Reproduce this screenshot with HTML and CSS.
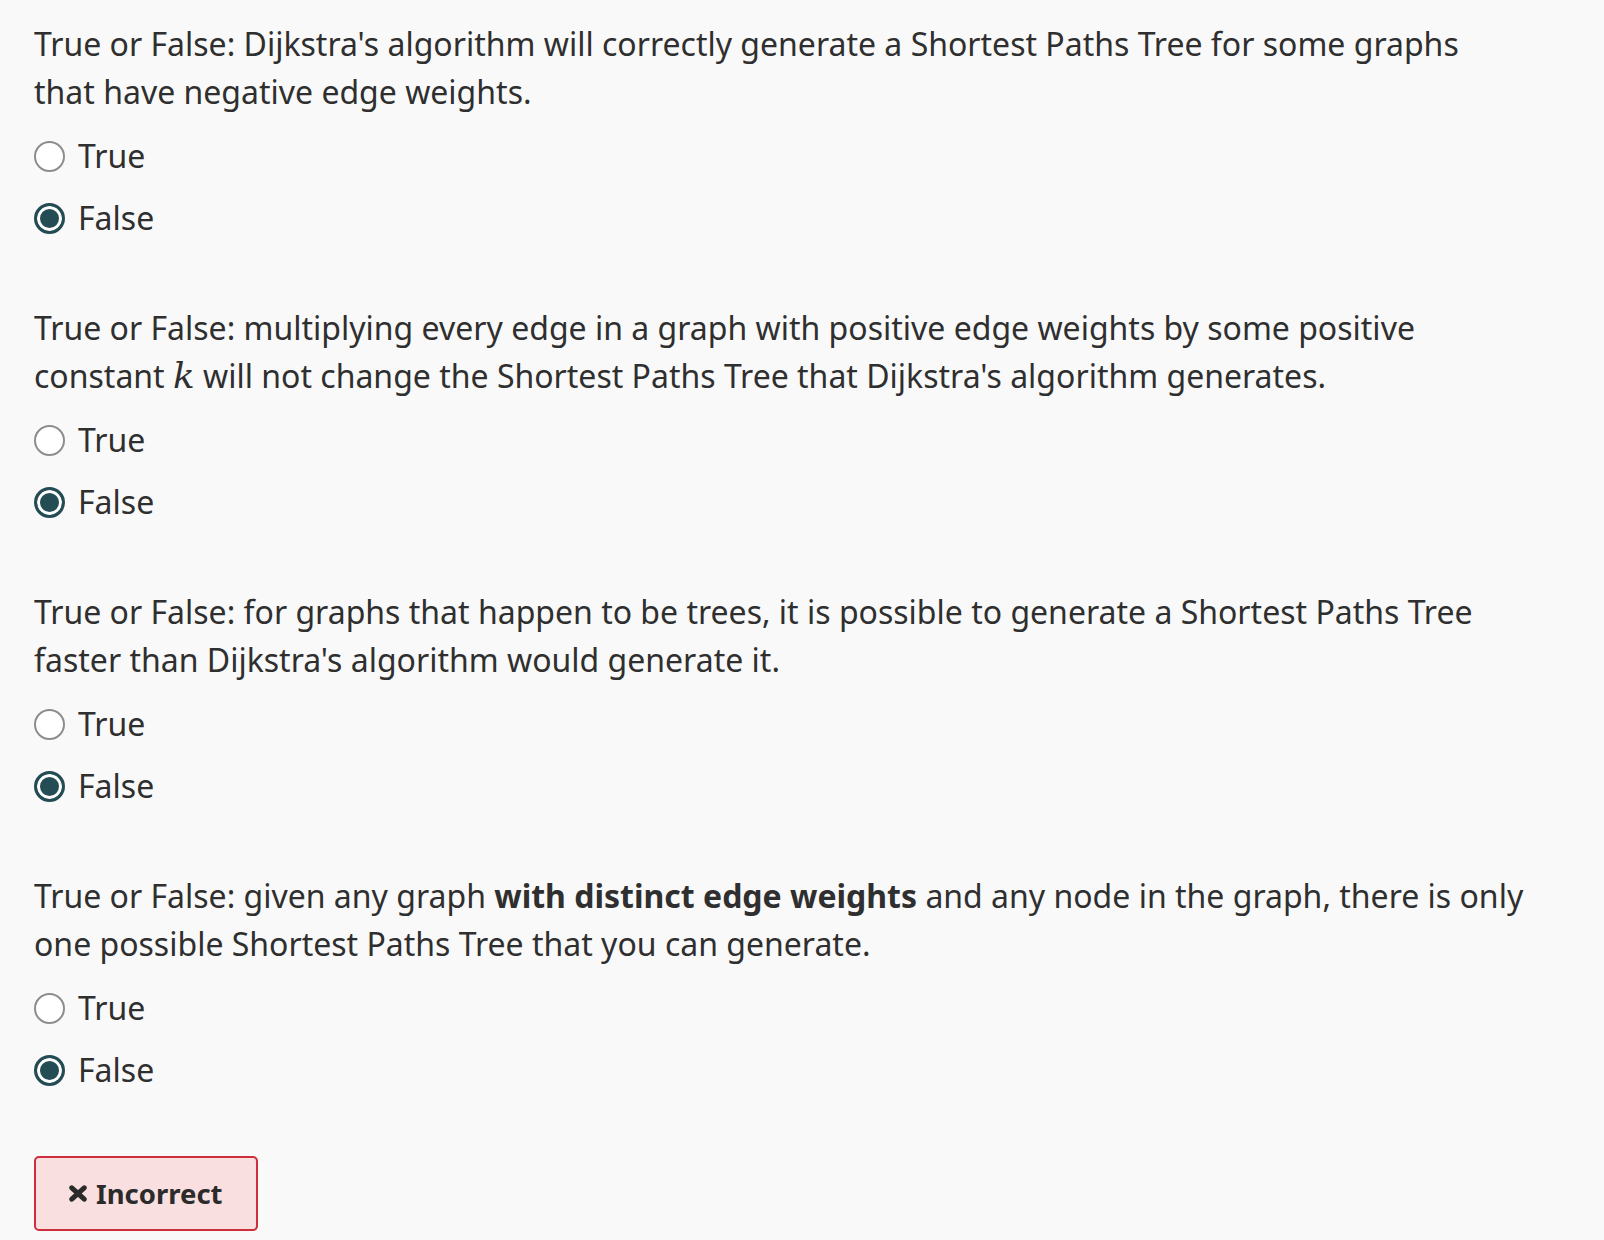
FILE: index.html
```html
<!DOCTYPE html>
<html lang="en">
<head>
<meta charset="utf-8">
<title>Quiz</title>
<link rel="stylesheet" href="styles.css">
</head>
<body>
<main class="quiz">
  <section class="question">
    <p class="prompt">True or False: Dijkstra's algorithm will correctly generate a Shortest Paths Tree for some graphs that have negative edge weights.</p>
    <label class="option"><input type="radio" name="q1" class="radio"><span>True</span></label>
    <label class="option"><input type="radio" name="q1" class="radio" checked><span>False</span></label>
  </section>
  <section class="question">
    <p class="prompt">True or False: multiplying every edge in a graph with positive edge weights by some positive constant <span class="math">k</span> will not change the Shortest Paths Tree that Dijkstra's algorithm generates.</p>
    <label class="option"><input type="radio" name="q2" class="radio"><span>True</span></label>
    <label class="option"><input type="radio" name="q2" class="radio" checked><span>False</span></label>
  </section>
  <section class="question">
    <p class="prompt">True or False: for graphs that happen to be trees, it is possible to generate a Shortest Paths Tree faster than Dijkstra's algorithm would generate it.</p>
    <label class="option"><input type="radio" name="q3" class="radio"><span>True</span></label>
    <label class="option"><input type="radio" name="q3" class="radio" checked><span>False</span></label>
  </section>
  <section class="question">
    <p class="prompt">True or False: given any graph <strong>with distinct edge weights</strong> and any node in the graph, there is only one possible Shortest Paths Tree that you can generate.</p>
    <label class="option"><input type="radio" name="q4" class="radio"><span>True</span></label>
    <label class="option"><input type="radio" name="q4" class="radio" checked><span>False</span></label>
  </section>
  <div class="result">
    <svg class="x-icon" viewBox="0 0 18 17" width="18" height="17" aria-hidden="true">
      <path d="M2.8 2.8 L15.2 14.2 M15.2 2.8 L2.8 14.2" stroke="#2b2b2b" stroke-width="5" stroke-linecap="round"/>
    </svg>
    <span>Incorrect</span>
  </div>
</main>
</body>
</html>
```

FILE: styles.css
```css
html, body {
  margin: 0;
  padding: 0;
  background: #f9f9f9;
}
body {
  font-family: "Noto Sans", "Open Sans", sans-serif;
  font-size: 32px;
  line-height: 48px;
  color: #2f2f2f;
}
.quiz {
  padding: 20px 0 0 34px;
  width: 1492px;
}
.question {
  margin-bottom: 62px;
}
.prompt {
  margin: 0 0 16px 0;
}
.prompt strong {
  font-weight: 700;
}
.math {
  font-family: "DejaVu Serif", "Liberation Serif", serif;
  font-style: italic;
  font-size: 1.12em;
  line-height: 1;
}
.option {
  display: flex;
  align-items: center;
  gap: 13px;
  height: 48px;
  margin-bottom: 14px;
}
.option:last-child {
  margin-bottom: 0;
}
.radio {
  appearance: none;
  -webkit-appearance: none;
  margin: 0;
  width: 31px;
  height: 31px;
  border: 2px solid #8d8d8d;
  border-radius: 50%;
  background: #ffffff;
  box-sizing: border-box;
  flex: none;
}
.radio:checked {
  border: 3px solid #244c55;
  background: #244c55;
  box-shadow: inset 0 0 0 3px #ffffff;
}
.result {
  display: inline-flex;
  align-items: center;
  gap: 9px;
  height: 75px;
  box-sizing: border-box;
  padding: 0 33px 0 33px;
  border: 2px solid #cc2f3b;
  border-radius: 5px;
  background: #f9dfe0;
  font-size: 27.5px;
  font-weight: 700;
  color: #2b2b2b;
}
.x-icon {
  flex: none;
}
```
